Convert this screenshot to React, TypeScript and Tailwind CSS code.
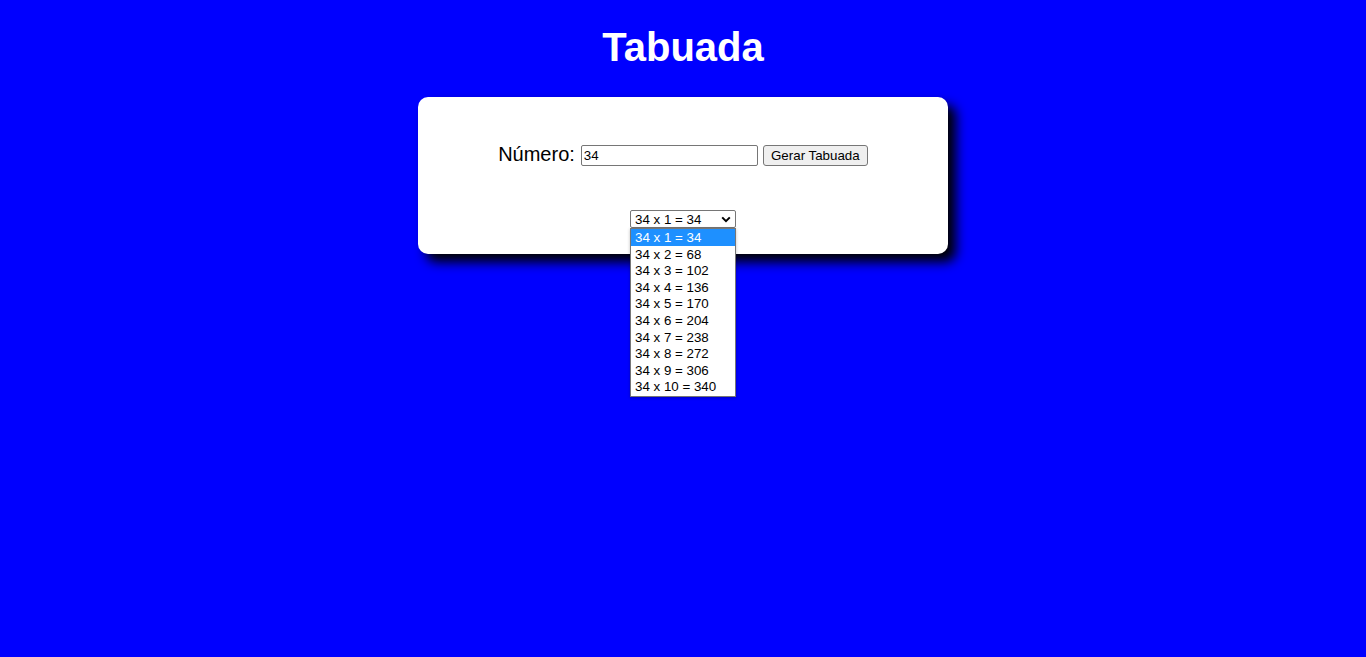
import React from "react";

const rows = Array.from({ length: 10 }, (_, i) => `34 x ${i + 1} = ${34 * (i + 1)}`);

function Chevron() {
  return (
    <svg width="10" height="7" viewBox="0 0 10 7" className="block">
      <path d="M1.2 1.4 L5 5.2 L8.8 1.4" fill="none" stroke="#000" strokeWidth="2" />
    </svg>
  );
}

export default function App() {
  return (
    <div
      className="min-h-[657px] w-full bg-[#0000ff] flex flex-col items-center"
      style={{ fontFamily: '"Liberation Sans", Arial, sans-serif' }}
    >
      <h1 className="pt-[24px] text-[40px] leading-[46px] font-bold text-white">Tabuada</h1>

      <div className="mt-[27px] w-[530px] h-[157px] bg-white rounded-[10px] shadow-[8px_8px_12px_black] flex flex-col items-center pt-[48px]">
        <div className="flex items-center h-[21px]">
          <span className="text-[20px] leading-[21px] text-black mr-[6px] -mt-[3px]">Número:</span>
          <div className="w-[177px] h-[21px] border border-[#767676] rounded-[2px] px-[2px] text-[13.33px] leading-[19px] text-black">
            34
          </div>
          <div className="ml-[5px] w-[105px] h-[21px] border border-[#767676] rounded-[3px] bg-[#efefef] text-[13.33px] leading-[19px] text-black text-center">
            Gerar Tabuada
          </div>
        </div>

        <div className="relative mt-[44px]">
          <div className="w-[106px] h-[18px] border border-[#767676] rounded-[2px] bg-white flex items-center justify-between pl-[4px] pr-[4px] text-[13.33px] leading-[16px] text-black">
            <span className="pt-[1px]">{rows[0]}</span>
            <Chevron />
          </div>
          <div className="absolute left-0 top-[18px] w-[106px] border border-[#767676] bg-white shadow-[0_1px_3px_rgba(0,0,0,0.25)] z-10 pb-[1px]">
            {rows.map((r, i) => (
              <div
                key={r}
                className={
                  i === 0
                    ? "h-[16.6px] leading-[16.6px] pl-[4px] pt-[1px] text-[13.33px] bg-[#1e90ff] text-white"
                    : "h-[16.6px] leading-[16.6px] pl-[4px] pt-[1px] text-[13.33px] text-black"
                }
              >
                {r}
              </div>
            ))}
          </div>
        </div>
      </div>
    </div>
  );
}
